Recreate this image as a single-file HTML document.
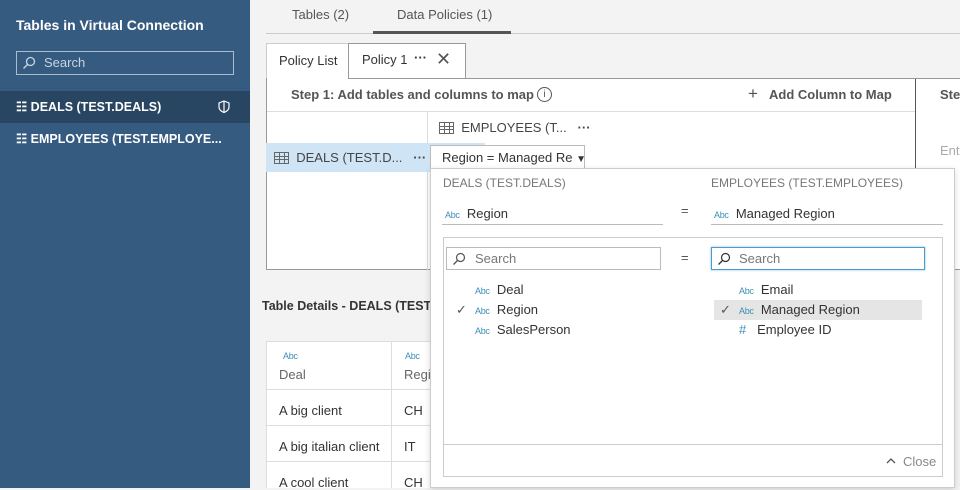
<!DOCTYPE html>
<html><head><meta charset="utf-8"><style>
*{box-sizing:border-box;margin:0;padding:0}
body{width:960px;height:488px;overflow:hidden;background:#f3f3f3;font-family:"Liberation Sans",sans-serif;font-size:13px;color:#333;position:relative}
.a{position:absolute}
.side{left:0;top:0;width:250px;height:488px;background:#365b80;color:#fff}
.abc{font-size:9px;color:#3a8fb5;letter-spacing:-0.3px}
.tbl{display:inline-block;width:15px;height:12px;border:1px solid #666;background:linear-gradient(#666,#666) 0 3px/100% 1px no-repeat,linear-gradient(#666,#666) 0 6px/100% 1px no-repeat,linear-gradient(#666,#666) 4px 0/1px 100% no-repeat,linear-gradient(#666,#666) 9px 0/1px 100% no-repeat;vertical-align:-2px}
</style></head><body>
<div class="a side">
 <div class="a" style="left:16px;top:17px;font-size:14px;font-weight:bold">Tables in Virtual Connection</div>
 <div class="a" style="left:16px;top:51px;width:218px;height:24px;border:1px solid #a9bdd1"></div>
 <svg class="a" style="left:22px;top:56px" width="14" height="14"><circle cx="8.5" cy="5.5" r="4" fill="none" stroke="#c8d4e0" stroke-width="1.3"/><line x1="5.5" y1="8.5" x2="1.5" y2="12.5" stroke="#c8d4e0" stroke-width="1.4"/></svg>
 <div class="a" style="left:44px;top:55px;color:#c8d4e0">Search</div>
 <div class="a" style="left:0;top:91px;width:250px;height:32px;background:#284562"></div>
 <div class="a" style="left:16px;top:99px;font-weight:bold;font-size:12.5px">&#9783; DEALS (TEST.DEALS)</div>
 <svg class="a" style="left:218px;top:100px" width="12" height="13"><path d="M6 1L11 3V7C11 10 8.5 11.5 6 12.5C3.5 11.5 1 10 1 7V3Z M6 1V12.5" fill="none" stroke="#fff" stroke-width="1.2"/></svg>
 <div class="a" style="left:16px;top:131px;font-weight:bold;font-size:12.5px">&#9783; EMPLOYEES (TEST.EMPLOYE...</div>
</div>
<div class="a" style="left:292px;top:7px;color:#555">Tables (2)</div>
<div class="a" style="left:397px;top:7px;color:#555">Data Policies (1)</div>
<div class="a" style="left:266px;top:33px;width:694px;height:1px;background:#ccc"></div>
<div class="a" style="left:373px;top:31px;width:138px;height:3px;background:#555"></div>
<div class="a" style="left:266px;top:43px;width:83px;height:36px;background:#fff;border:1px solid #ccc"></div>
<div class="a" style="left:279px;top:53px">Policy List</div>
<div class="a" style="left:348px;top:43px;width:118px;height:37px;background:#fff;border:1px solid #999;border-bottom:none"></div>
<div class="a" style="left:362px;top:52px">Policy 1</div>
<div class="a" style="left:414px;top:50px;font-weight:bold">···</div>
<div class="a" style="left:436px;top:49px;font-size:18px;color:#555">✕</div>
<div class="a" style="left:266px;top:78px;width:694px;height:192px;background:#fff;border:1px solid #999;border-top:none;border-right:none"></div>
<div class="a" style="left:348px;top:78px;width:612px;height:1px;background:#999"></div>
<div class="a" style="left:267px;top:111px;width:648px;height:1px;background:#ddd"></div>
<div class="a" style="left:915px;top:79px;width:1px;height:191px;background:#555"></div>
<div class="a" style="left:427px;top:111px;width:1px;height:159px;background:#ddd"></div>
<div class="a" style="left:291px;top:87px;color:#555;font-weight:bold">Step 1: Add tables and columns to map</div>
<div class="a" style="left:537px;top:87px;width:15px;height:15px;border:1.3px solid #555;border-radius:50%;font-size:10px;text-align:center;line-height:13px;color:#555">i</div>
<div class="a" style="left:748px;top:84px;font-size:17px;color:#555">+</div>
<div class="a" style="left:769px;top:87px;color:#555;font-weight:bold">Add Column to Map</div>
<div class="a" style="left:940px;top:87px;color:#555;font-weight:bold">Ste</div>
<div class="a" style="left:940px;top:143px;color:#aaa">Ent</div>
<div class="a" style="left:439px;top:120px;color:#444"><span class="tbl"></span>&nbsp; EMPLOYEES (T...&nbsp;&nbsp; <b>···</b></div>
<div class="a" style="left:266px;top:143px;width:219px;height:29px;background:#cfe4f5"></div>
<div class="a" style="left:274px;top:150px;color:#444"><span class="tbl"></span>&nbsp; DEALS (TEST.D...&nbsp;&nbsp; <b>···</b></div>
<div class="a" style="left:430px;top:145px;width:155px;height:24px;background:#fff;border:1px solid #bbb"></div>
<div class="a" style="left:442px;top:150px;color:#333">Region = Managed Re <span style="font-size:10px">▼</span></div>
<div class="a" style="left:262px;top:299px;font-weight:bold;color:#333;font-size:12.5px">Table Details - DEALS (TEST.D</div>
<div class="a" style="left:266px;top:341px;width:164px;height:147px;background:#fff;border-left:1px solid #ddd"></div>
<div class="a" style="left:391px;top:341px;width:1px;height:147px;background:#ddd"></div>
<div class="a" style="left:266px;top:341px;width:164px;height:1px;background:#ddd"></div>
<div class="a" style="left:266px;top:389px;width:164px;height:1px;background:#ddd"></div>
<div class="a" style="left:266px;top:425px;width:164px;height:1px;background:#ddd"></div>
<div class="a" style="left:266px;top:461px;width:164px;height:1px;background:#ddd"></div>
<div class="a abc" style="left:283px;top:351px">Abc</div><div class="a abc" style="left:405px;top:351px">Abc</div>
<div class="a" style="left:279px;top:367px;color:#666">Deal</div><div class="a" style="left:404px;top:367px;color:#666">Regi</div>
<div class="a" style="left:279px;top:403px">A big client</div><div class="a" style="left:404px;top:403px">CH</div>
<div class="a" style="left:279px;top:439px">A big italian client</div><div class="a" style="left:404px;top:439px">IT</div>
<div class="a" style="left:279px;top:475px">A cool client</div><div class="a" style="left:404px;top:475px">CH</div>
<div class="a" style="left:430px;top:168px;width:525px;height:320px;background:#fff;border:1px solid #ccc;box-shadow:0 2px 6px rgba(0,0,0,.15)"></div>
<div class="a" style="left:443px;top:176px;color:#777;font-size:12px">DEALS (TEST.DEALS)</div>
<div class="a" style="left:711px;top:176px;color:#777;font-size:12px">EMPLOYEES (TEST.EMPLOYEES)</div>
<div class="a" style="left:445px;top:206px"><span class="abc">Abc</span>&nbsp; Region</div>
<div class="a" style="left:681px;top:203px;color:#555">=</div>
<div class="a" style="left:714px;top:206px"><span class="abc">Abc</span>&nbsp; Managed Region</div>
<div class="a" style="left:442px;top:224px;width:221px;height:1px;background:#bbb"></div>
<div class="a" style="left:711px;top:224px;width:232px;height:1px;background:#bbb"></div>
<div class="a" style="left:443px;top:237px;width:500px;height:240px;border:1px solid #ccc"></div>
<div class="a" style="left:444px;top:444px;width:498px;height:1px;background:#ccc"></div>
<div class="a" style="left:446px;top:247px;width:215px;height:23px;border:1px solid #bbb"></div>
<div class="a" style="left:711px;top:247px;width:214px;height:23px;border:1px solid #4a9ad6;box-shadow:0 0 2px #8bc"></div>
<svg class="a" style="left:452px;top:252px" width="14" height="14"><circle cx="8.5" cy="5.5" r="4" fill="none" stroke="#555" stroke-width="1.2"/><line x1="5.5" y1="8.5" x2="1.5" y2="12.5" stroke="#555" stroke-width="1.3"/></svg>
<svg class="a" style="left:717px;top:252px" width="14" height="14"><circle cx="8.5" cy="5.5" r="4" fill="none" stroke="#333" stroke-width="1.2"/><line x1="5.5" y1="8.5" x2="1.5" y2="12.5" stroke="#333" stroke-width="1.3"/></svg>
<div class="a" style="left:475px;top:251px;color:#777">Search</div>
<div class="a" style="left:681px;top:250px;color:#555">=</div>
<div class="a" style="left:739px;top:251px;color:#777">Search</div>
<div class="a" style="left:475px;top:282px"><span class="abc">Abc</span>&nbsp; Deal</div>
<div class="a" style="left:456px;top:302px;color:#555">✓</div>
<div class="a" style="left:475px;top:302px"><span class="abc">Abc</span>&nbsp; Region</div>
<div class="a" style="left:475px;top:322px"><span class="abc">Abc</span>&nbsp; SalesPerson</div>
<div class="a" style="left:714px;top:300px;width:208px;height:20px;background:#e5e5e5"></div>
<div class="a" style="left:739px;top:282px"><span class="abc">Abc</span>&nbsp; Email</div>
<div class="a" style="left:720px;top:302px;color:#555">✓</div>
<div class="a" style="left:739px;top:302px"><span class="abc">Abc</span>&nbsp; Managed Region</div>
<div class="a" style="left:739px;top:322px"><span style="color:#3a8fb5">#</span>&nbsp;&nbsp; Employee ID</div>
<svg class="a" style="left:886px;top:457px" width="10" height="8"><path d="M1 6L5 2L9 6" fill="none" stroke="#555" stroke-width="1.3"/></svg>
<div class="a" style="left:903px;top:454px;color:#888">Close</div>
</body></html>
